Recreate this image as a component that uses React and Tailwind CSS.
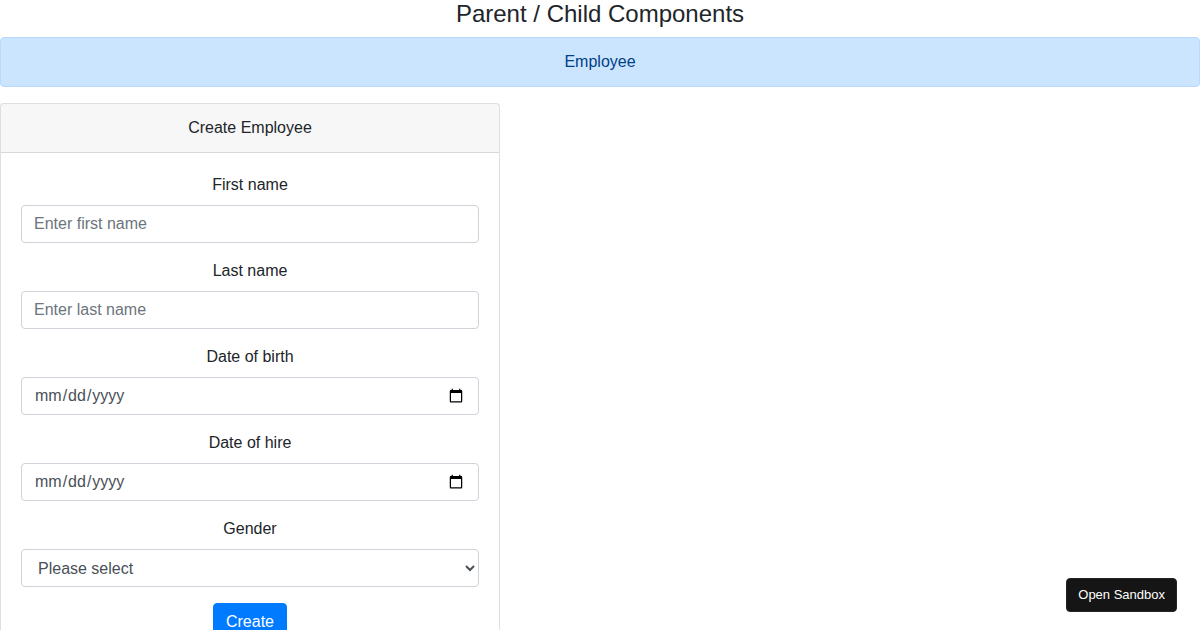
import { useState } from "react";

const emptyEmployee = {
    firstName: "",
    lastName: "",
    dateOfBirth: "",
    dateOfHire: "",
    gender: "",
};

const fields = [
    { id: "firstName", label: "First name", type: "text", placeholder: "Enter first name" },
    { id: "lastName", label: "Last name", type: "text", placeholder: "Enter last name" },
    { id: "dateOfBirth", label: "Date of birth", type: "date" },
    { id: "dateOfHire", label: "Date of hire", type: "date" },
];

const controlClass =
    "block h-[38px] w-full rounded border border-[#ced4da] bg-white px-3 py-1.5 text-base text-[#495057] placeholder:text-[#6c757d]";

export default function App() {
    return (
        <div className="h-screen overflow-hidden bg-white text-center font-['Helvetica_Neue','Liberation_Sans',Arial,sans-serif] text-base text-[#212529]">
            <h1 className="mb-2.5 text-2xl leading-[27px]">Parent / Child Components</h1>
            <Employee />
            <OpenSandbox />
        </div>
    );
}

function Employee() {
    return (
        <main>
            <div className="mb-4 rounded border border-[#b8daff] bg-[#cce5ff] px-5 py-3 text-[#004085]">
                Employee
            </div>
            <CreateEmployee />
        </main>
    );
}

function CreateEmployee() {
    const [employee, setEmployee] = useState(emptyEmployee);

    const handleChange = (e) => {
        setEmployee({ ...employee, [e.target.name]: e.target.value });
    };

    const handleSubmit = (e) => {
        e.preventDefault();
        setEmployee(emptyEmployee);
    };

    return (
        <section className="w-full max-w-[500px] rounded border border-black/[.125] bg-white">
            <h2 className="border-b border-black/[.125] bg-black/[.03] px-5 py-3">Create Employee</h2>
            <form onSubmit={handleSubmit} className="p-5">
                {fields.map((field) => (
                    <div key={field.id} className="mb-4">
                        <label htmlFor={field.id} className="mb-2 inline-block align-top">
                            {field.label}
                        </label>
                        <input
                            id={field.id}
                            name={field.id}
                            type={field.type}
                            placeholder={field.placeholder}
                            value={employee[field.id]}
                            onChange={handleChange}
                            className={controlClass}
                        />
                    </div>
                ))}
                <div className="mb-4">
                    <label htmlFor="gender" className="mb-2 inline-block align-top">
                        Gender
                    </label>
                    <select
                        id="gender"
                        name="gender"
                        value={employee.gender}
                        onChange={handleChange}
                        className={controlClass}
                    >
                        <option value="">Please select</option>
                        <option value="female">Female</option>
                        <option value="male">Male</option>
                    </select>
                </div>
                <button
                    type="submit"
                    className="rounded border border-[#007bff] bg-[#007bff] px-3 py-1.5 text-white hover:bg-[#0069d9]"
                >
                    Create
                </button>
            </form>
        </section>
    );
}

function OpenSandbox() {
    return (
        <button
            type="button"
            className="fixed right-[23px] bottom-[18px] h-[34px] rounded border border-[#212529] bg-[#151515] px-[11px] text-[13px] text-white"
        >
            Open Sandbox
        </button>
    );
}
